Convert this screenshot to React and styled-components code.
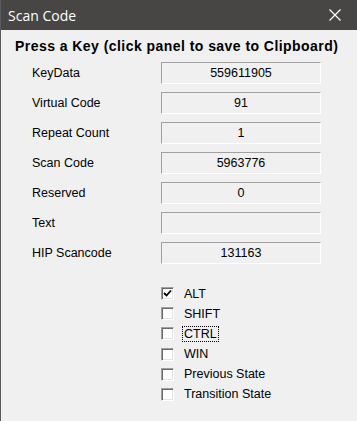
import React from "react";
import styled, { createGlobalStyle } from "styled-components";

const GlobalStyle = createGlobalStyle`
  html, body {
    margin: 0;
    padding: 0;
    background: #f0f0f0;
  }
`;

const fields = [
  { label: "KeyData", value: "559611905" },
  { label: "Virtual Code", value: "91" },
  { label: "Repeat Count", value: "1" },
  { label: "Scan Code", value: "5963776" },
  { label: "Reserved", value: "0" },
  { label: "Text", value: "" },
  { label: "HIP Scancode", value: "131163" },
];

const flags = [
  { label: "ALT", checked: true },
  { label: "SHIFT" },
  { label: "CTRL", focused: true },
  { label: "WIN" },
  { label: "Previous State" },
  { label: "Transition State" },
];

const App = () => {
  return (
    <>
      <GlobalStyle />
      <Window>
        <TitleBar>
          <Title>Scan Code</Title>
          <CloseButton>
            <svg width="14" height="14" viewBox="0 0 14 14">
              <path d="M1.5 1.5 L12.5 12.5 M12.5 1.5 L1.5 12.5" stroke="#ffffff" strokeWidth="1.2" />
            </svg>
          </CloseButton>
        </TitleBar>
        <Body>
          <Heading>Press a Key (click panel to save to Clipboard)</Heading>
          <Fields>
            {fields.map((f) => (
              <FieldRow key={f.label}>
                <Label>{f.label}</Label>
                <ValueBox>{f.value}</ValueBox>
              </FieldRow>
            ))}
          </Fields>
          <Flags>
            {flags.map((f) => (
              <CheckRow key={f.label}>
                <CheckBox>
                  {f.checked && (
                    <svg width="9" height="9" viewBox="0 0 9 9">
                      <path d="M1 4 L3.5 6.5 L8 1.5" stroke="#000" strokeWidth="1.8" fill="none" />
                    </svg>
                  )}
                </CheckBox>
                <CheckLabel $focused={f.focused}>{f.label}</CheckLabel>
              </CheckRow>
            ))}
          </Flags>
        </Body>
      </Window>
    </>
  );
};

export default App;

const Window = styled.div`
  width: 357px;
  height: 421px;
  display: flex;
  flex-direction: column;
  box-sizing: border-box;
  border-left: 1px solid #5a5a5a;
  background: #f0f0f0;
  font-family: "Liberation Sans", Arial, sans-serif;
  color: #000;
  overflow: hidden;
`;

const TitleBar = styled.div`
  height: 30px;
  background: #474645;
  display: flex;
  align-items: center;
  justify-content: space-between;
  padding-left: 7px;
  flex-shrink: 0;
`;

const Title = styled.div`
  color: #ffffff;
  font-family: "Open Sans", "Noto Sans", sans-serif;
  font-size: 14px;
`;

const CloseButton = styled.div`
  width: 44px;
  height: 30px;
  display: flex;
  align-items: center;
  justify-content: center;
`;

const Body = styled.div`
  display: flex;
  flex-direction: column;
`;

const Heading = styled.div`
  font-weight: bold;
  font-size: 14px;
  letter-spacing: 0.45px;
  padding: 8px 0 0 14px;
  height: 17px;
  line-height: 17px;
  white-space: nowrap;
`;

const Fields = styled.div`
  display: flex;
  flex-direction: column;
  gap: 8px;
  margin-top: 7px;
`;

const FieldRow = styled.div`
  display: flex;
  align-items: center;
  height: 22px;
`;

const Label = styled.div`
  width: 129px;
  padding-left: 31px;
  font-size: 12.5px;
`;

const ValueBox = styled.div`
  width: 160px;
  height: 22px;
  box-sizing: border-box;
  border-top: 1px solid #a0a0a0;
  border-left: 1px solid #a0a0a0;
  border-right: 1px solid #ffffff;
  border-bottom: 1px solid #ffffff;
  display: flex;
  align-items: center;
  justify-content: center;
  font-size: 12.5px;
`;

const Flags = styled.div`
  display: flex;
  flex-direction: column;
  gap: 7.2px;
  margin-top: 23px;
  padding-left: 160px;
`;

const CheckRow = styled.div`
  display: flex;
  align-items: center;
  height: 13px;
`;

const CheckBox = styled.div`
  width: 13px;
  height: 13px;
  box-sizing: border-box;
  background: #ffffff;
  border-top: 1px solid #a0a0a0;
  border-left: 1px solid #a0a0a0;
  border-right: 1px solid #ffffff;
  border-bottom: 1px solid #ffffff;
  box-shadow: inset 1px 1px 0 #696969, inset -1px -1px 0 #e3e3e3;
  display: flex;
  align-items: center;
  justify-content: center;
`;

const CheckLabel = styled.div`
  margin-left: 9px;
  font-size: 12.5px;
  line-height: 14px;
  padding: 0 1px;
  outline: ${(p) => (p.$focused ? "1px dotted #000" : "none")};
`;
